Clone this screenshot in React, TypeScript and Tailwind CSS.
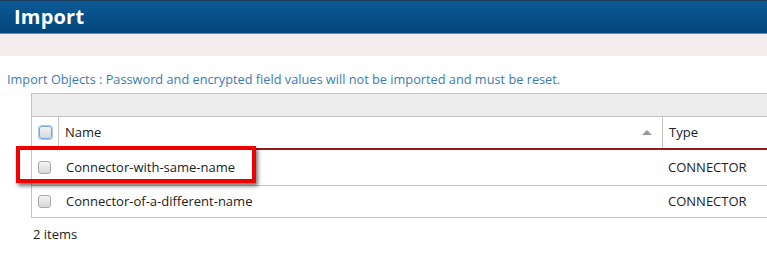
import { useState } from 'react';

type Row = { name: string; type: string; highlight?: boolean };

const ROWS: Row[] = [
  { name: 'Connector-with-same-name', type: 'CONNECTOR', highlight: true },
  { name: 'Connector-of-a-different-name', type: 'CONNECTOR' },
];

function Box({ focus }: { focus?: boolean }) {
  return (
    <span
      className={`block h-[13px] w-[13px] rounded-[3px] border bg-gradient-to-b from-[#f4f4f4] to-[#d8d8d8] ${
        focus ? 'border-[#7aa8e8] shadow-[0_0_0_1px_#a8c8f4]' : 'border-[#a8a8a8]'
      }`}
    />
  );
}

export default function App() {
  const [rows] = useState(ROWS);

  return (
    <div className="h-[253px] w-[767px] overflow-hidden bg-white font-['Open_Sans',sans-serif] text-[13px] text-[#222]">
      <div className="flex h-[33px] items-center bg-gradient-to-b from-[#0b5a96] to-[#03467a] px-[14px] border-t border-[#1d3c5c]">
        <h1 className="text-[20px] font-bold text-white tracking-[0.2px]">Import</h1>
      </div>
      <div className="h-px bg-[#2aa3c7]" />
      <div className="h-[22px] bg-[#f5eded]" />

      <p className="mt-[15px] pl-[7px] text-[12.75px] leading-[16px] text-[#3b7bb2]">
        Import Objects : Password and encrypted field values will not be imported and must be reset.
      </p>

      <div className="relative ml-[31px] mt-[6px]">
        <div className="border-l border-t border-[#c4c4c4]">
          <div className="h-[23px] border-b border-[#c4c4c4] bg-[#ededed]" />
          <div className="flex h-[33px] items-center border-b-2 border-[#8e1c1c]">
            <div className="flex w-[26px] shrink-0 justify-center pl-[1px]">
              <Box focus />
            </div>
            <div className="flex h-full flex-1 items-center justify-between border-l border-[#c4c4c4] pl-[6px] pr-[10px]">
              <span>Name</span>
              <span className="h-0 w-0 border-x-[5px] border-b-[5px] border-x-transparent border-b-[#9a9a9a]" />
            </div>
            <div className="flex h-full w-[105px] items-center border-l border-[#c4c4c4] pl-[6px]">Type</div>
          </div>
          {rows.map((r, i) => (
            <div
              key={r.name}
              className={`flex items-center border-b border-[#c4c4c4] ${i === 0 ? 'h-[36px]' : 'h-[32px]'}`}
            >
              <div className="flex w-[26px] shrink-0 justify-center pr-[1px]">
                <Box />
              </div>
              <div className="flex-1 pl-[8px]">{r.name}</div>
              <div className="w-[105px] pl-[6px]">{r.type}</div>
            </div>
          ))}
        </div>
        <p className="pl-[2px] pt-[7px]">{rows.length} items</p>

        <div className="pointer-events-none absolute left-[-15px] top-[53px] h-[37px] w-[240px] border-4 border-[#f20000] shadow-[2px_3px_4px_rgba(0,0,0,0.55)]" />
      </div>
    </div>
  );
}
